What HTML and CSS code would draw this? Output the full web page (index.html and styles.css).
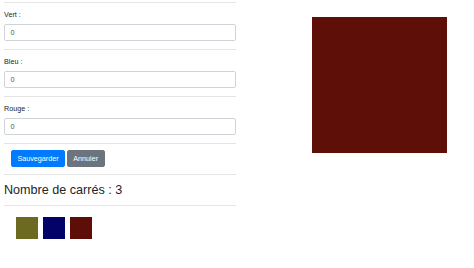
FILE: index.html
```html
<!DOCTYPE html>
<html lang="fr">
<head>
<meta charset="utf-8">
<title>Carrés</title>
<link rel="stylesheet" href="styles.css">
</head>
<body>
<div class="page">
  <div class="left">
    <hr class="sep">
    <div class="field">
      <label class="label" for="vert">Vert :</label>
      <input class="input" id="vert" type="text" value="0">
    </div>
    <hr class="sep">
    <div class="field">
      <label class="label" for="bleu">Bleu :</label>
      <input class="input" id="bleu" type="text" value="0">
    </div>
    <hr class="sep">
    <div class="field">
      <label class="label" for="rouge">Rouge :</label>
      <input class="input" id="rouge" type="text" value="0">
    </div>
    <hr class="sep">
    <div class="actions">
      <button class="btn btn-primary" type="button">Sauvegarder</button>
      <button class="btn btn-secondary" type="button">Annuler</button>
    </div>
    <hr class="sep">
    <h3 class="title">Nombre de carrés : 3</h3>
    <hr class="sep">
    <div class="squares">
      <div class="square sq-olive"></div>
      <div class="square sq-navy"></div>
      <div class="square sq-red"></div>
    </div>
  </div>
  <div class="preview"></div>
</div>
</body>
</html>
```

FILE: styles.css
```css
html, body {
  margin: 0;
  padding: 0;
  background: #fff;
}

body {
  font-family: "Liberation Sans", Arial, sans-serif;
  color: #212529;
}

.page {
  display: flex;
  align-items: flex-start;
}

.left {
  width: 232px;
  margin-left: 4px;
  padding-top: 2px;
}

.sep {
  border: 0;
  border-top: 1px solid rgba(0, 0, 0, 0.1);
  margin: 0;
  height: 0;
}

.field {
  padding-top: 6px;
  padding-bottom: 8px;
}

.label {
  display: block;
  font-size: 7.2px;
  line-height: 11px;
  margin-bottom: 4px;
}

.input {
  display: block;
  box-sizing: border-box;
  width: 100%;
  height: 17px;
  margin: 0;
  border: 1px solid #ced4da;
  border-radius: 2px;
  padding: 0 5.4px;
  font-family: inherit;
  font-size: 7.2px;
  color: #495057;
  background: #fff;
  outline: none;
}

.actions {
  display: flex;
  gap: 2px;
  padding: 6px 0 7px 7px;
}

.btn {
  box-sizing: border-box;
  height: 17px;
  margin: 0;
  padding: 0 5.4px;
  border: 1px solid transparent;
  border-radius: 2px;
  font-family: inherit;
  font-size: 7.2px;
  line-height: 15px;
  color: #fff;
  cursor: pointer;
}

.btn-primary {
  background: #007bff;
  border-color: #007bff;
}

.btn-secondary {
  background: #6c757d;
  border-color: #6c757d;
}

.title {
  margin: 8.4px 0 6.5px;
  font-size: 12.6px;
  line-height: 15.1px;
  font-weight: 400;
  color: #212529;
}

.squares {
  display: flex;
  padding: 11px 0 0 9.45px;
}

.square {
  width: 22.5px;
  height: 22.5px;
  margin: 0 2.25px;
}

.sq-olive { background: rgb(107, 106, 32); }
.sq-navy { background: rgb(2, 2, 104); }
.sq-red { background: rgb(94, 14, 8); }

.preview {
  width: 135px;
  height: 136px;
  margin-left: 75.7px;
  margin-top: 17px;
  background: rgb(94, 15, 8);
}
```
